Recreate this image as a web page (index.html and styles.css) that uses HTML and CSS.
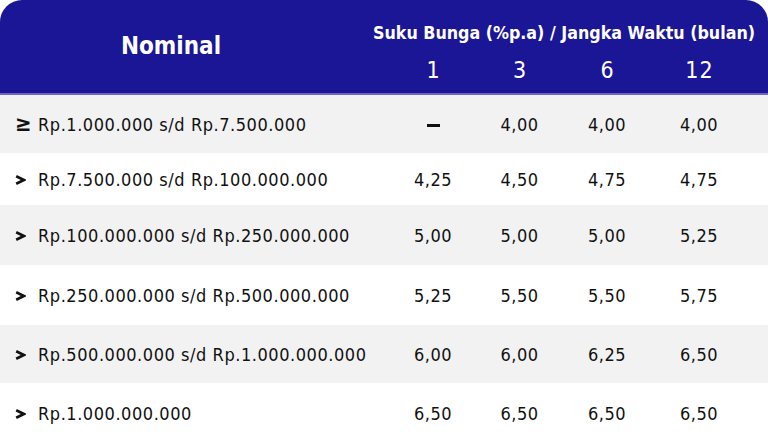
FILE: index.html
```html
<!DOCTYPE html>
<html>
<head>
<meta charset="utf-8">
<link rel="stylesheet" href="styles.css">
</head>
<body>
<div class="table">
  <div class="head">
    <div class="nominal">Nominal</div>
    <div class="suku">Suku Bunga (%p.a) / Jangka Waktu (bulan)</div>
    <div class="hn">1</div>
    <div class="hn">3</div>
    <div class="hn">6</div>
    <div class="hn">12</div>
  </div>
  <div class="row grey h58">
    <div class="label"><span class="ge">&#8805;</span>Rp.1.000.000 s/d Rp.7.500.000</div>
    <div class="v"><span class="dash"></span></div><div class="v">4,00</div><div class="v">4,00</div><div class="v">4,00</div>
  </div>
  <div class="row h52">
    <div class="label"><svg class="chev" width="11" height="10" viewBox="0 0 11 10"><path d="M1.2 1.3 L9 5 L1.2 8.7" fill="none" stroke="#111" stroke-width="2.8" stroke-linejoin="miter"/></svg>Rp.7.500.000 s/d Rp.100.000.000</div>
    <div class="v">4,25</div><div class="v">4,50</div><div class="v">4,75</div><div class="v">4,75</div>
  </div>
  <div class="row grey h60">
    <div class="label"><svg class="chev" width="11" height="10" viewBox="0 0 11 10"><path d="M1.2 1.3 L9 5 L1.2 8.7" fill="none" stroke="#111" stroke-width="2.8" stroke-linejoin="miter"/></svg>Rp.100.000.000 s/d Rp.250.000.000</div>
    <div class="v">5,00</div><div class="v">5,00</div><div class="v">5,00</div><div class="v">5,25</div>
  </div>
  <div class="row h60">
    <div class="label"><svg class="chev" width="11" height="10" viewBox="0 0 11 10"><path d="M1.2 1.3 L9 5 L1.2 8.7" fill="none" stroke="#111" stroke-width="2.8" stroke-linejoin="miter"/></svg>Rp.250.000.000 s/d Rp.500.000.000</div>
    <div class="v">5,25</div><div class="v">5,50</div><div class="v">5,50</div><div class="v">5,75</div>
  </div>
  <div class="row grey h58">
    <div class="label"><svg class="chev" width="11" height="10" viewBox="0 0 11 10"><path d="M1.2 1.3 L9 5 L1.2 8.7" fill="none" stroke="#111" stroke-width="2.8" stroke-linejoin="miter"/></svg>Rp.500.000.000 s/d Rp.1.000.000.000</div>
    <div class="v">6,00</div><div class="v">6,00</div><div class="v">6,25</div><div class="v">6,50</div>
  </div>
  <div class="row h61">
    <div class="label"><svg class="chev" width="11" height="10" viewBox="0 0 11 10"><path d="M1.2 1.3 L9 5 L1.2 8.7" fill="none" stroke="#111" stroke-width="2.8" stroke-linejoin="miter"/></svg>Rp.1.000.000.000</div>
    <div class="v">6,50</div><div class="v">6,50</div><div class="v">6,50</div><div class="v">6,50</div>
  </div>
</div>
</body>
</html>
```
FILE: styles.css
```css
html, body {
  margin: 0;
  padding: 0;
  background: #ffffff;
}
body {
  font-family: "DejaVu Sans", sans-serif;
  font-stretch: condensed;
  color: #111111;
  width: 768px;
  height: 444px;
  overflow: hidden;
}
.table {
  width: 768px;
}
.head {
  background: #1b1696;
  border-radius: 22px 22px 0 0;
  height: 93px;
  border-bottom: 2px solid #6a66c2;
  display: grid;
  grid-template-columns: 390px 86px 87px 88px 96px 21px;
  grid-template-rows: 47px 46px;
  color: #ffffff;
}
.nominal {
  grid-column: 1;
  grid-row: 1 / 3;
  display: flex;
  align-items: center;
  justify-content: center;
  width: 342px;
  font-weight: bold;
  font-size: 24px;
  padding-bottom: 2px;
}
.suku {
  grid-column: 2 / 7;
  grid-row: 1;
  justify-self: end;
  align-self: end;
  margin-right: 13px;
  margin-left: -40px;
  font-weight: bold;
  font-size: 17.7px;
  white-space: nowrap;
  padding-bottom: 4px;
}
.hn {
  grid-row: 2;
  text-align: center;
  font-size: 23px;
  letter-spacing: 1px;
  text-indent: 1px;
  padding-top: 10px;
}
.row {
  display: grid;
  grid-template-columns: 390px 86px 87px 88px 96px 21px;
  align-items: center;
  font-size: 18px;
  letter-spacing: 0.55px;
}
.grey { background: #f2f2f2; }
.h58 { height: 58px; }
.h52 { height: 52px; }
.h60 { height: 60px; }
.h61 { height: 61px; }
.label {
  display: flex;
  align-items: center;
  padding-left: 15px;
  white-space: nowrap;
}
.chev {
  flex: none;
  margin-right: 12px;
  margin-top: 1px;
}
.ge {
  font-weight: bold;
  font-size: 22px;
  width: 23px;
  letter-spacing: 0;
  line-height: 1;
}
.v {
  text-align: center;
}
.dash {
  display: inline-block;
  width: 13px;
  height: 3px;
  background: #111111;
  vertical-align: middle;
}
```
